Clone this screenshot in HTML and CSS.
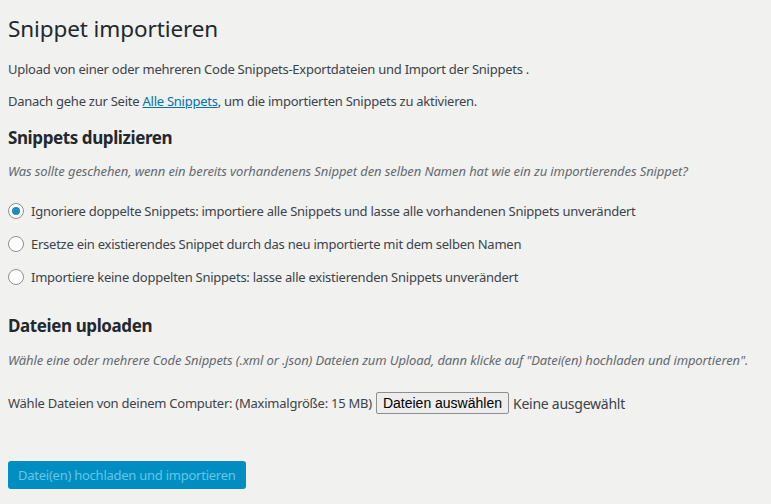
FILE: index.html
```html
<!DOCTYPE html>
<html lang="de">
<head>
<meta charset="utf-8">
<title>Snippet importieren</title>
<link rel="stylesheet" href="styles.css">
</head>
<body>
<div class="wrap">
  <h1 class="page-title">Snippet importieren</h1>
  <p class="text">Upload von einer oder mehreren Code Snippets-Exportdateien und Import der Snippets .</p>
  <p class="text">Danach gehe zur Seite <a href="#" class="link">Alle Snippets</a>, um die importierten Snippets zu aktivieren.</p>

  <h2 class="section-title">Snippets duplizieren</h2>
  <p class="desc">Was sollte geschehen, wenn ein bereits vorhandenens Snippet den selben Namen hat wie ein zu importierendes Snippet?</p>

  <div class="options">
    <label class="option"><span class="radio checked"></span>Ignoriere doppelte Snippets: importiere alle Snippets und lasse alle vorhandenen Snippets unverändert</label>
    <label class="option"><span class="radio"></span>Ersetze ein existierendes Snippet durch das neu importierte mit dem selben Namen</label>
    <label class="option"><span class="radio"></span>Importiere keine doppelten Snippets: lasse alle existierenden Snippets unverändert</label>
  </div>

  <h2 class="section-title upload-title">Dateien uploaden</h2>
  <p class="desc desc-upload">Wähle eine oder mehrere Code Snippets (.xml or .json) Dateien zum Upload, dann klicke auf "Datei(en) hochladen und importieren".</p>

  <div class="file-row">
    <span class="file-label">Wähle Dateien von deinem Computer: (Maximalgröße: 15 MB)</span>
    <span class="file-button">Dateien auswählen</span>
    <span class="file-status">Keine ausgewählt</span>
  </div>

  <div class="submit-row">
    <span class="submit-button">Datei(en) hochladen und importieren</span>
  </div>
</div>
</body>
</html>
```

FILE: styles.css
```css
html, body {
  margin: 0;
  padding: 0;
  background: #f1f1f0;
}

body {
  font-family: "Noto Sans", "Open Sans", sans-serif;
  font-size: 13px;
  letter-spacing: -0.25px;
  color: #3c434a;
}

.wrap {
  padding: 14px 8px 0 8px;
}

.page-title {
  margin: 0;
  font-size: 22.5px;
  font-weight: 400;
  letter-spacing: -0.1px;
  line-height: 30px;
  color: #23282d;
}

.text {
  margin: 17px 0 0 0;
  line-height: 16px;
  color: #3c434a;
}

.text + .text {
  margin-top: 16px;
}

.link {
  color: #0073aa;
  text-decoration: underline;
}

.section-title {
  margin: 18px 0 0 0;
  font-size: 17px;
  font-weight: 700;
  letter-spacing: -0.4px;
  line-height: 22px;
  color: #23282d;
}

.desc {
  margin: 14px 0 0 0;
  font-style: italic;
  letter-spacing: -0.1px;
  line-height: 16px;
  color: #646970;
}

.desc-upload {
  margin-top: 15px;
  letter-spacing: -0.12px;
}

.options {
  display: flex;
  flex-direction: column;
  gap: 13px;
  margin-top: 22px;
}

.option {
  display: flex;
  align-items: center;
  gap: 7px;
  line-height: 20px;
  color: #3c434a;
}

.radio {
  box-sizing: border-box;
  width: 16px;
  height: 16px;
  border: 1px solid #8c8f94;
  border-radius: 50%;
  background: #fff;
  display: flex;
  align-items: center;
  justify-content: center;
  flex: none;
}

.radio.checked::before {
  content: "";
  width: 8px;
  height: 8px;
  border-radius: 50%;
  background: #1e8cbe;
}

.upload-title {
  margin-top: 28px;
}

.file-row {
  display: flex;
  align-items: center;
  margin-top: 24px;
  gap: 4px;
}

.file-button {
  box-sizing: border-box;
  height: 22px;
  padding: 0 6px;
  border: 1px solid #8f8f8f;
  border-radius: 2px;
  background: #ededed;
  font-family: "Liberation Sans", Arial, sans-serif;
  font-size: 14px;
  letter-spacing: 0;
  line-height: 20px;
  color: #000;
}

.file-status {
  font-size: 14px;
  letter-spacing: -0.25px;
  color: #3c434a;
}

.submit-row {
  margin-top: 47px;
}

.submit-button {
  display: inline-block;
  box-sizing: border-box;
  height: 28px;
  padding: 0 10px;
  border-radius: 3px;
  background: #008ec2;
  color: #66c6e4;
  line-height: 28px;
}
```
